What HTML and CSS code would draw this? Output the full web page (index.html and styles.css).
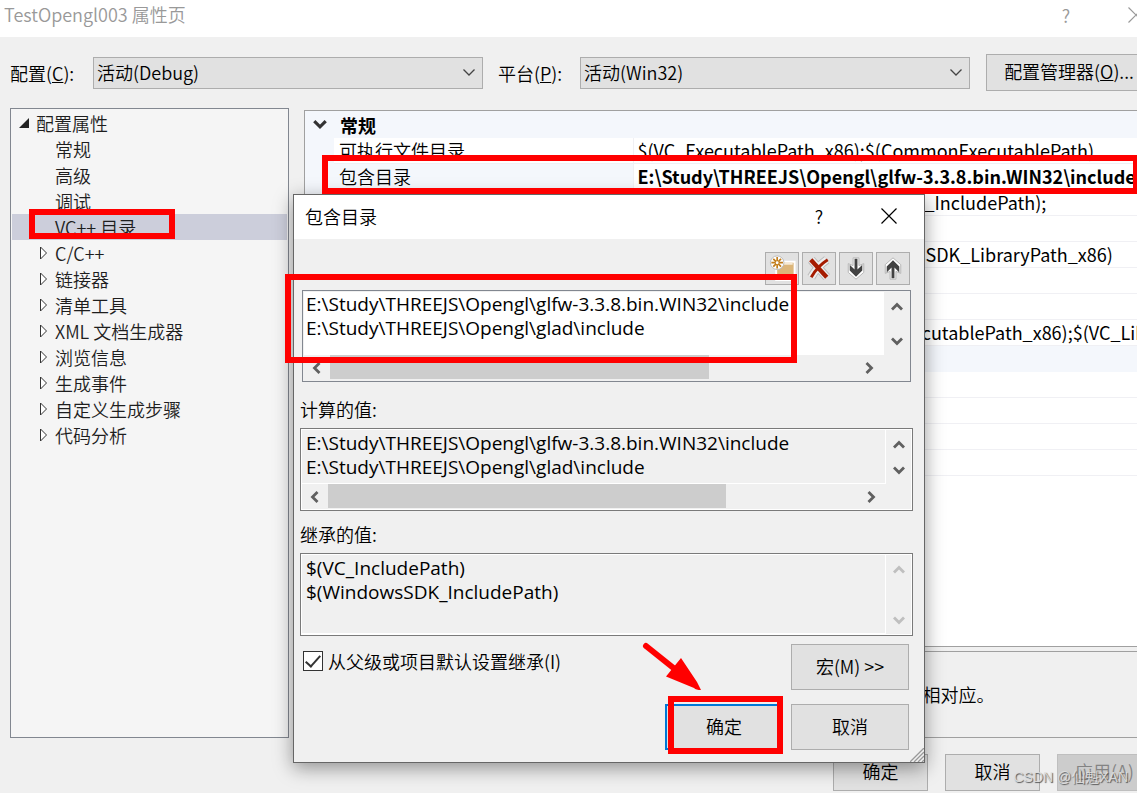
FILE: index.html
```html
<!DOCTYPE html>
<html lang="zh-CN">
<head>
<meta charset="utf-8">
<title>TestOpengl003 属性页</title>
<link rel="stylesheet" href="styles.css">
</head>
<body>
<svg class="defs" aria-hidden="true">
  <symbol id="up" viewBox="0 0 14 14"><path d="M2 9.500 7 4.500 12 9.500" fill="none" stroke="currentColor" stroke-width="2.800"/></symbol>
  <symbol id="down" viewBox="0 0 14 14"><path d="M2 4.500 7 9.500 12 4.500" fill="none" stroke="currentColor" stroke-width="2.800"/></symbol>
  <symbol id="left" viewBox="0 0 14 14"><path d="M9.500 2 4.500 7 9.500 12" fill="none" stroke="currentColor" stroke-width="2.800"/></symbol>
  <symbol id="right" viewBox="0 0 14 14"><path d="M4.500 2 9.500 7 4.500 12" fill="none" stroke="currentColor" stroke-width="2.800"/></symbol>
  <symbol id="thin" viewBox="0 0 14 14"><path d="M1.500 4.500 7 10 12.500 4.500" fill="none" stroke="currentColor" stroke-width="1.300"/></symbol>
  <symbol id="node" viewBox="0 0 14 14"><path d="M4.500 1v12L10.500 7z" fill="#fff" stroke="#333"/></symbol>
  <symbol id="open" viewBox="0 0 14 14"><path d="M11 2v10H1z" fill="#222"/></symbol>
  <symbol id="close" viewBox="0 0 16 16"><path d="M.5.5l15 15M15.500.5l-15 15" stroke="currentColor" stroke-width="1.200"/></symbol>
</svg>

<div class="window">
  <header class="titlebar">
    <h1>TestOpengl003 属性页</h1>
    <button class="caption" aria-label="帮助">?</button>
    <button class="caption close" aria-label="关闭"><svg class="i16"><use href="#close"/></svg></button>
  </header>

  <div class="settings">
    <label for="cfg">配置(<u>C</u>):</label>
    <div class="combo"><select id="cfg"><option>活动(Debug)</option></select><svg class="i14"><use href="#thin"/></svg></div>
    <label for="plat" class="plat">平台(<u>P</u>):</label>
    <div class="combo"><select id="plat"><option>活动(Win32)</option></select><svg class="i14"><use href="#thin"/></svg></div>
    <button class="btn manager">配置管理器(<u>O</u>)...</button>
  </div>

  <main class="body">
    <nav class="tree">
      <ul>
        <li class="root"><svg class="i14"><use href="#open"/></svg>配置属性</li>
        <li>常规</li>
        <li>高级</li>
        <li>调试</li>
        <li class="selected">VC++ 目录</li>
        <li><svg class="i14"><use href="#node"/></svg>C/C++</li>
        <li><svg class="i14"><use href="#node"/></svg>链接器</li>
        <li><svg class="i14"><use href="#node"/></svg>清单工具</li>
        <li><svg class="i14"><use href="#node"/></svg>XML 文档生成器</li>
        <li><svg class="i14"><use href="#node"/></svg>浏览信息</li>
        <li><svg class="i14"><use href="#node"/></svg>生成事件</li>
        <li><svg class="i14"><use href="#node"/></svg>自定义生成步骤</li>
        <li><svg class="i14"><use href="#node"/></svg>代码分析</li>
      </ul>
    </nav>
    <section class="right">
      <div class="grid">
        <table>
          <colgroup><col class="c-gutter"><col class="c-name"><col></colgroup>
          <tr class="group"><td class="gutter"><svg class="i16"><use href="#down"/></svg></td><th colspan="2">常规</th></tr>
          <tr><td class="gutter"></td><td class="name">可执行文件目录</td><td>$(VC_ExecutablePath_x86);$(CommonExecutablePath)</td></tr>
          <tr class="current"><td class="gutter"></td><td class="name">包含目录</td><td>E:\Study\THREEJS\Opengl\glfw-3.3.8.bin.WIN32\include</td></tr>
          <tr><td class="gutter"></td><td class="name"></td><td>$(VC_IncludePath);$(WindowsSDK_IncludePath);</td></tr>
          <tr><td class="gutter"></td><td class="name"></td><td></td></tr>
          <tr><td class="gutter"></td><td class="name"></td><td>$(VC_LibraryPath_x86);$(WindowsSDK_LibraryPath_x86)</td></tr>
          <tr><td class="gutter"></td><td class="name"></td><td></td></tr>
          <tr><td class="gutter"></td><td class="name"></td><td></td></tr>
          <tr><td class="gutter"></td><td class="name"></td><td>$(CommonExcludePath);$(VC_ExecutablePath_x86);$(VC_LibraryPath_x86)</td></tr>
          <tr class="group"><td class="gutter"></td><th colspan="2"></th></tr>
          <tr><td class="gutter"></td><td class="name"></td><td></td></tr>
          <tr><td class="gutter"></td><td class="name"></td><td></td></tr>
          <tr><td class="gutter"></td><td class="name"></td><td></td></tr>
          <tr><td class="gutter"></td><td class="name"></td><td></td></tr>
        </table>
      </div>
      <p class="hint">生成 VC++ 项目期间，搜索包含文件时使用的路径。与环境变量 INCLUDE 相对应。</p>
    </section>
  </main>

  <footer class="actions">
    <button class="btn">确定</button>
    <button class="btn">取消</button>
    <button class="btn" disabled>应用(A)</button>
  </footer>
</div>

<div class="dialog" role="dialog" aria-labelledby="dlg">
  <header class="dialog-title">
    <h2 id="dlg">包含目录</h2>
    <button class="caption" aria-label="帮助">?</button>
    <button class="caption" aria-label="关闭"><svg class="i16"><use href="#close"/></svg></button>
  </header>
  <div class="dialog-body">
    <div class="tools">
      <button aria-label="新行"><svg viewBox="0 0 32 32"><path d="M10 12h6l2-3h11v19H10z" fill="#dcb67a" stroke="#fff" stroke-width="2"/><path d="M18 9.500h9v2.500h-10z" fill="#f6ead6"/><circle cx="11" cy="10" r="7" fill="#fff" stroke="#bbb"/><path d="M11 4v12M5 10h12M7 6l8 8M15 6l-8 8" stroke="#c27d1a" stroke-width="1.700"/><circle cx="11" cy="10" r="1.500" fill="#fff"/></svg></button>
      <button aria-label="删除"><svg viewBox="0 0 32 32"><path d="M8 7l16 18M24 7C17 12 12 18 8 25" fill="none" stroke="#bbb" stroke-width="9"/><path d="M8 7l16 18M24 7C17 12 12 18 8 25" fill="none" stroke="#eee" stroke-width="7"/><path d="M7.500 7l16.500 18" stroke="#a51b00" stroke-width="4.500"/><path d="M25 7C17 12 12 18 8 25" fill="none" stroke="#a51b00" stroke-width="3"/></svg></button>
      <button aria-label="下移"><svg viewBox="0 0 32 32"><path d="M13 5h6v8l5-2v9l-8 7-8-7v-9l5 2z" fill="#fff" stroke="#b5b5b5"/><path d="M14.500 6h3v11l5-5v6L16 24.500l-6.500-6.500v-6l5 5z" fill="#424242"/></svg></button>
      <button aria-label="上移"><svg viewBox="0 0 32 32"><path d="M13 27h6v-8l5 2v-9l-8-7-8 7v9l5-2z" fill="#fff" stroke="#b5b5b5"/><path d="M14.500 26h3V15l5 5v-6L16 7.500 9.500 14v6l5-5z" fill="#424242"/></svg></button>
    </div>

    <div class="box editable">
      <textarea aria-label="包含目录" wrap="off">E:\Study\THREEJS\Opengl\glfw-3.3.8.bin.WIN32\include
E:\Study\THREEJS\Opengl\glad\include</textarea>
      <div class="vbar"><svg class="i14"><use href="#up"/></svg><svg class="i14"><use href="#down"/></svg></div>
      <div class="hbar"><svg class="i14"><use href="#left"/></svg><span class="track"><span class="thumb"></span></span><svg class="i14"><use href="#right"/></svg></div>
    </div>

    <label for="eval">计算的值:</label>
    <div class="box evaluated">
      <textarea id="eval" wrap="off" readonly>E:\Study\THREEJS\Opengl\glfw-3.3.8.bin.WIN32\include
E:\Study\THREEJS\Opengl\glad\include</textarea>
      <div class="vbar"><svg class="i14"><use href="#up"/></svg><svg class="i14"><use href="#down"/></svg></div>
      <div class="hbar"><svg class="i14"><use href="#left"/></svg><span class="track"><span class="thumb"></span></span><svg class="i14"><use href="#right"/></svg></div>
    </div>

    <label for="inh">继承的值:</label>
    <div class="box inherited">
      <textarea id="inh" wrap="off" readonly>$(VC_IncludePath)
$(WindowsSDK_IncludePath)</textarea>
      <div class="vbar"><svg class="i14"><use href="#up"/></svg><svg class="i14"><use href="#down"/></svg></div>
    </div>

    <div class="row first">
      <label class="check"><input type="checkbox" checked>从父级或项目默认设置继承(I)</label>
      <button class="btn">宏(M) &gt;&gt;</button>
    </div>
    <div class="row">
      <button class="btn default">确定</button>
      <button class="btn">取消</button>
    </div>
  </div>
  <svg class="grip" viewBox="0 0 14 14"><path d="M0 14 14 0M4 14 14 4M8 14l6-6M12 14l2-2" stroke="#999" stroke-width="1.300"/></svg>
</div>

<div class="mark mark-tree"></div>
<div class="mark mark-row"></div>
<div class="mark mark-edit"></div>
<div class="mark mark-ok"></div>
<svg class="arrow" viewBox="0 0 60 50"><path d="M4 5 34 29" stroke="red" stroke-width="6" stroke-linecap="round"/><path d="M39 17 24 35.500 52 47q2 2 7 2L55 41z" fill="red"/></svg>
<div class="watermark">CSDN @仙魁XAN</div>
</body>
</html>
```
FILE: styles.css
```css
* { box-sizing: border-box; }
body {
  margin: 0;
  overflow: hidden;
  background: #f0f0f0;
  color: #000;
  font: 350 18px/26px "Noto Sans CJK SC", sans-serif;
}
button, select, textarea, input { font: inherit; color: inherit; margin: 0; }
h1, h2, p, ul { margin: 0; padding: 0; font-size: 18px; font-weight: inherit; }
ul { list-style: none; }
svg { display: block; flex: none; }
.defs { position: absolute; width: 0; height: 0; }
.i14 { width: 14px; height: 14px; }
.i16 { width: 16px; height: 16px; }

.window { display: flex; flex-direction: column; height: 100vh; overflow: hidden; }
.titlebar { display: flex; align-items: center; height: 37px; padding: 0 0 10px 4px; background: #fff; color: #999; flex: none; }
.titlebar h1 { flex: 1; }
.caption { display: flex; align-items: center; justify-content: center; width: 70px; height: 30px; padding: 0; border: 0; background: none; flex: none; }
.titlebar .caption { padding-top: 2px; }
.titlebar .close { margin-right: -34px; }

.settings { display: flex; align-items: center; height: 71px; padding-left: 10px; flex: none; }
.settings label { width: 83px; }
.settings .plat { width: 82px; margin-left: 15px; }
.combo { position: relative; flex: 1; display: flex; }
.combo select { width: 100%; height: 32px; padding: 0 3px 2px; appearance: none; border: 1px solid #adadad; border-radius: 0; background: #e1e1e1; }
.combo svg { position: absolute; right: 7px; top: 8px; color: #444; }
.btn { border: 1px solid #adadad; border-radius: 0; background: #e1e1e1; padding: 0 0 3px; }
.manager { width: 166px; height: 37px; margin: 0 -15px 0 16px; }

.body { display: flex; flex: 1; min-height: 0; padding-left: 10px; gap: 15px; }
.tree { width: 279px; padding: 1px 1px 0; border: 1px solid #828790; background: #f5f5f5; color: #1e1e1e; }
.tree li { display: flex; align-items: center; height: 26px; padding: 0 0 1px 43px; }
.tree li svg { margin: 0 5px 0 -19px; }
.tree .root { padding-left: 24px; }
.tree .root svg { margin: 0 4px 0 -18px; }
.tree .selected { background: #cccedb; }

.right { display: flex; flex-direction: column; flex: 1; min-width: 0; gap: 4px; padding-top: 2px; }
.grid { flex: 1; min-height: 0; overflow: hidden; border: 1px solid #a0a0a0; border-right: 0; background: #fff; }
.grid table { width: 100%; border-collapse: collapse; table-layout: fixed; }
.grid tr { height: 26px; }
.c-gutter { width: 29px; }
.c-name { width: 299px; }
.grid td, .grid th { padding: 0 0 0 4px; height: 26px; border-bottom: 1px solid #f0f0f4; white-space: nowrap; text-align: left; line-height: 25px; overflow: hidden; }
.grid td:last-child { font-weight: 400; }
.grid .gutter { padding-left: 7px; background: #f4f7fc; border-bottom-color: #f4f7fc; color: #333; }
.grid .name { padding-left: 5px; border-right: 1px solid #f0f0f4; }
.grid .group td, .grid .group th { background: #f4f7fc; border-color: #f4f7fc; }
.grid .group th { padding: 2px 0 0 6px; line-height: 24px; font-weight: 700; }
.grid .current .name { background: #f4f7fc; }
.grid .current td:last-child { font-weight: 700; }
.hint { height: 87px; padding: 29px 0 0 36px; border: 1px solid #a0a0a0; border-right: 0; white-space: nowrap; overflow: hidden; flex: none; }

.actions { display: flex; justify-content: flex-end; gap: 17px; height: 55px; padding-top: 16px; margin-right: -15px; flex: none; }
.actions .btn { width: 95px; height: 37px; flex: none; }
.actions .btn:disabled { background: #ccc; border-color: #bfbfbf; color: #838383; }

.dialog { position: absolute; left: 293px; top: 194px; width: 632px; border: 1px solid #666; background: #f0f0f0; box-shadow: 0 5px 18px rgba(0, 0, 0, .4); }
.dialog-title { display: flex; align-items: center; height: 44px; padding: 0 0 2px 11px; background: #fff; }
.dialog-title h2 { flex: 1; }
.dialog-body { display: flex; flex-direction: column; padding: 13px 11px 12px 6px; }
.dialog-body > label { height: 46px; padding-top: 14px; }
.dialog-body .evaluated + label { height: 42px; padding-top: 10px; }
.tools { display: flex; justify-content: flex-end; gap: 3px; margin: 0 3px 5px 0; }
.tools button { width: 34px; height: 33px; padding: 0; border: 1px solid #adadad; background: #e1e1e1; }
.tools svg { width: 32px; height: 31px; }

.box { display: grid; grid-template: 1fr 25px / 1fr 25px; padding: 1px; border: 1px solid #7a7a7a; color: #000; }
.box textarea { display: block; width: 100%; height: 100%; padding: 1px 4px; border: 0; border-radius: 0; resize: none; overflow: hidden; background: #f0f0f0; font: 19px/24px "Open Sans", "Noto Sans CJK SC", sans-serif; outline: 0; }
.vbar { display: flex; flex-direction: column; align-items: center; justify-content: space-between; padding: 8px 0 7px; color: #606060; }
.hbar { grid-column: 1 / 3; display: flex; align-items: center; gap: 6px; padding: 0 33px 0 6px; color: #606060; }
.track { flex: 1; height: 100%; }
.thumb { display: block; width: 72%; height: 24px; background: #cdcdcd; }
.editable { height: 92px; margin: 0 2px; border-color: #828790; }
.editable textarea { background: #fff; padding: 0 2px; }
.evaluated { height: 83px; box-shadow: inset 0 0 0 1px #fff; }
.evaluated .thumb { width: 75%; }
.evaluated textarea, .inherited textarea { border-right: 1px solid #fff; border-bottom: 1px solid #fff; }
.inherited { height: 83px; grid-template-rows: 1fr; box-shadow: inset 0 0 0 1px #fff; }
.inherited .vbar { color: #bfbfbf; }

.row { display: flex; justify-content: flex-end; gap: 8px; padding-right: 4px; margin-top: 14px; }
.row.first { margin-top: 8px; justify-content: space-between; }
.row .btn { width: 118px; height: 46px; }
.row .default { border: 2px solid #0078d7; }
.check { display: flex; align-items: center; gap: 5px; height: 34px; padding-left: 3px; }
.check input { appearance: none; width: 20px; height: 20px; border: 1px solid #333; background: #fff; display: grid; place-items: center; }
.check input:checked::before { content: ""; width: 6px; height: 13px; margin-bottom: 4px; border: solid #333; border-width: 0 2px 2px 0; transform: rotate(42deg); }
.grip { position: absolute; right: 0; bottom: 0; width: 14px; height: 14px; }

.mark { position: absolute; border: 6px solid #f00; pointer-events: none; }
.mark-tree { left: 29px; top: 209px; width: 146px; height: 30px; }
.mark-row { left: 322px; top: 155px; right: -2px; height: 39px; }
.mark-edit { left: 285px; top: 274px; width: 512px; height: 89px; }
.mark-ok { left: 668px; top: 696px; width: 115px; height: 58px; }
.arrow { position: absolute; left: 642px; top: 641px; width: 60px; height: 50px; }
.watermark { position: absolute; right: 9px; bottom: 4px; font: 14px/24px "Liberation Sans", "Noto Sans CJK SC", sans-serif; color: rgba(225, 225, 225, .9); text-shadow: 1px 1px 1px #555; }
```
